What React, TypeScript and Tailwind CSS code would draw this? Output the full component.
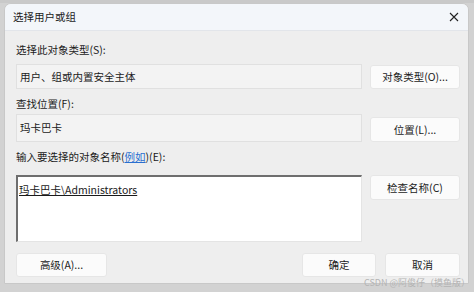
import React from "react";

const font = { fontFamily: '"Noto Sans CJK SC", "Noto Sans", sans-serif' };

function Btn({ children, className = "" }: { children: React.ReactNode; className?: string }) {
  return (
    <div
      className={
        "flex items-center justify-center bg-[#fbfbfb] border border-[#e6e6e6] rounded-[3px] text-[10.5px] text-[#1a1a1a] " +
        className
      }
    >
      {children}
    </div>
  );
}

export default function App() {
  return (
    <div className="relative w-[474px] h-[292px] overflow-hidden bg-[#d2d2d2]" style={font}>
      <div className="absolute left-0 top-0 w-full h-[3px] bg-[#c9c9c9]" />
      <div className="ml-[4px] mt-[3px] w-[465px] h-[281px] flex flex-col rounded-t-[7px] border border-[#c8c8c8] bg-[#eeeeee] overflow-hidden">
        {/* title bar */}
        <div className="h-[27px] shrink-0 flex items-center justify-between pl-[8px] pr-[7px] bg-[#f3f6fa] border-b border-[#e2e5ea]">
          <span className="text-[10.5px] text-[#1a1a1a]">选择用户或组</span>
          <svg width="10" height="10" viewBox="0 0 10 10" className="mr-[2px]">
            <path d="M1 1L9 9M9 1L1 9" stroke="#222" strokeWidth="1.1" />
          </svg>
        </div>

        <div className="flex flex-col pl-[11px] pr-[8px] pt-[11px] text-[10.5px] text-[#1a1a1a]">
          <div className="h-[16px] leading-[16px]">选择此对象类型(S):</div>
          <div className="mt-[6px] flex items-start gap-[8px]">
            <div className="w-[346px] h-[25px] flex items-center pl-[3px] bg-[#f3f3f3] border border-[#e0e0e0]">
              用户、组或内置安全主体
            </div>
            <Btn className="w-[90px] h-[24px] mt-[1px]">对象类型(O)...</Btn>
          </div>

          <div className="mt-[7px] h-[16px] leading-[16px]">查找位置(F):</div>
          <div className="mt-[2px] flex items-end gap-[8px]">
            <div className="w-[346px] h-[28px] flex items-center pl-[3px] bg-[#f3f3f3] border border-[#e0e0e0]">
              玛卡巴卡
            </div>
            <Btn className="w-[90px] h-[25px]">位置(L)...</Btn>
          </div>

          <div className="mt-[7px] h-[16px] leading-[16px]">
            输入要选择的对象名称(<span className="text-[#2a6fd0] underline">例如</span>)(E):
          </div>
          <div className="mt-[10px] flex items-start gap-[8px]">
            <div className="w-[346px] h-[67px] bg-white border-t-2 border-l-2 border-[#6e6e6e] border-r border-b border-r-[#e4e4e4] border-b-[#e4e4e4] pl-[1px] pt-[5px]">
              <span className="underline leading-[16px]">玛卡巴卡\Administrators</span>
            </div>
            <Btn className="w-[90px] h-[25px]">检查名称(C)</Btn>
          </div>

          <div className="mt-[11px] flex items-center">
            <Btn className="w-[91px] h-[24px]">高级(A)...</Btn>
            <div className="flex-1" />
            <Btn className="w-[74px] h-[24px]">确定</Btn>
            <Btn className="w-[75px] h-[24px] ml-[9px]">取消</Btn>
          </div>
        </div>
      </div>
      <div className="absolute left-[364px] top-[277px] text-[9px] leading-[12px] text-[#b4b4b4] whitespace-nowrap">
        CSDN @阿俊仔（摸鱼版）
      </div>
    </div>
  );
}
